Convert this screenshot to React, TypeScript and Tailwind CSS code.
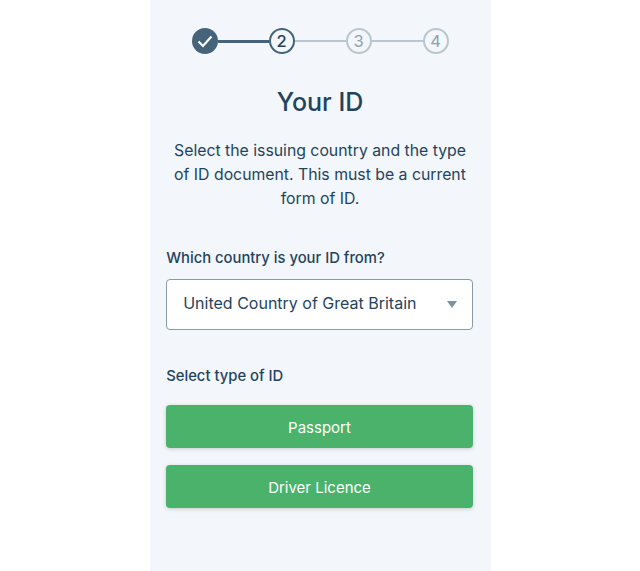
export default function App() {
  return (
    <div className="h-[571px] w-[640px] bg-white flex justify-center font-['Inter',sans-serif] overflow-hidden">
      <div className="w-[341px] h-full bg-[#f3f6fa] flex flex-col items-center text-[#1f4460]">
        <div className="mt-[28px] flex items-center">
          <svg width="26" height="26" viewBox="0 0 26 26"><circle cx="13" cy="13" r="13" fill="#45647a"/><path d="M6.5 13.5l4.5 4.5 8.5-9.5" fill="none" stroke="#fff" strokeWidth="2.2"/></svg>
          <div className="w-[51px] h-[3px] bg-[#45647a]"></div>
          <div className="w-[26px] h-[26px] rounded-full border-2 border-[#45647a] flex items-center justify-center text-[16.5px] font-medium text-[#1f4460]">2</div>
          <div className="w-[51px] h-[2px] bg-[#b9c6cd]"></div>
          <div className="w-[26px] h-[26px] rounded-full border-2 border-[#b9c6cd] flex items-center justify-center text-[16.5px] font-normal text-[#8fa1ae]">3</div>
          <div className="w-[51px] h-[2px] bg-[#b9c6cd]"></div>
          <div className="w-[26px] h-[26px] rounded-full border-2 border-[#b9c6cd] flex items-center justify-center text-[16.5px] font-normal text-[#8fa1ae]">4</div>
        </div>
        <h1 className="mt-[31px] text-[25px] leading-[34px] font-medium">Your ID</h1>
        <p className="mt-[20px] w-[310px] text-center text-[15.8px] leading-[24px]">Select the issuing country and the type<br />of ID document. This must be a current<br />form of ID.</p>
        <div className="w-[306.6px] mr-[1px] mt-[35px]">
          <div className="text-[14.8px] leading-[24px] font-medium">Which country is your ID from?</div>
          <div className="mt-[9px] h-[51px] pb-[3px] rounded-[4px] border border-[#8a9ba8] bg-white flex items-center justify-between pl-[16px] pr-[15px] text-[16px]">
            <span>United Country of Great Britain</span>
            <div className="mt-[3px] w-0 h-0 border-l-[5px] border-r-[5px] border-t-[7px] border-l-transparent border-r-transparent border-t-[#7d929f]"></div>
          </div>
          <div className="mt-[34px] text-[14.8px] leading-[24px] font-medium">Select type of ID</div>
          <div className="mt-[17px] h-[43px] pt-[3px] rounded-[4px] bg-[#4ab26a] text-white flex items-center justify-center text-[15px] font-normal shadow-[0_1px_4px_rgba(0,0,0,0.18)]">Passport</div>
          <div className="mt-[17px] h-[43px] pt-[3px] rounded-[4px] bg-[#4ab26a] text-white flex items-center justify-center text-[15px] font-normal shadow-[0_1px_4px_rgba(0,0,0,0.18)]">Driver Licence</div>
        </div>
      </div>
    </div>
  );
}
